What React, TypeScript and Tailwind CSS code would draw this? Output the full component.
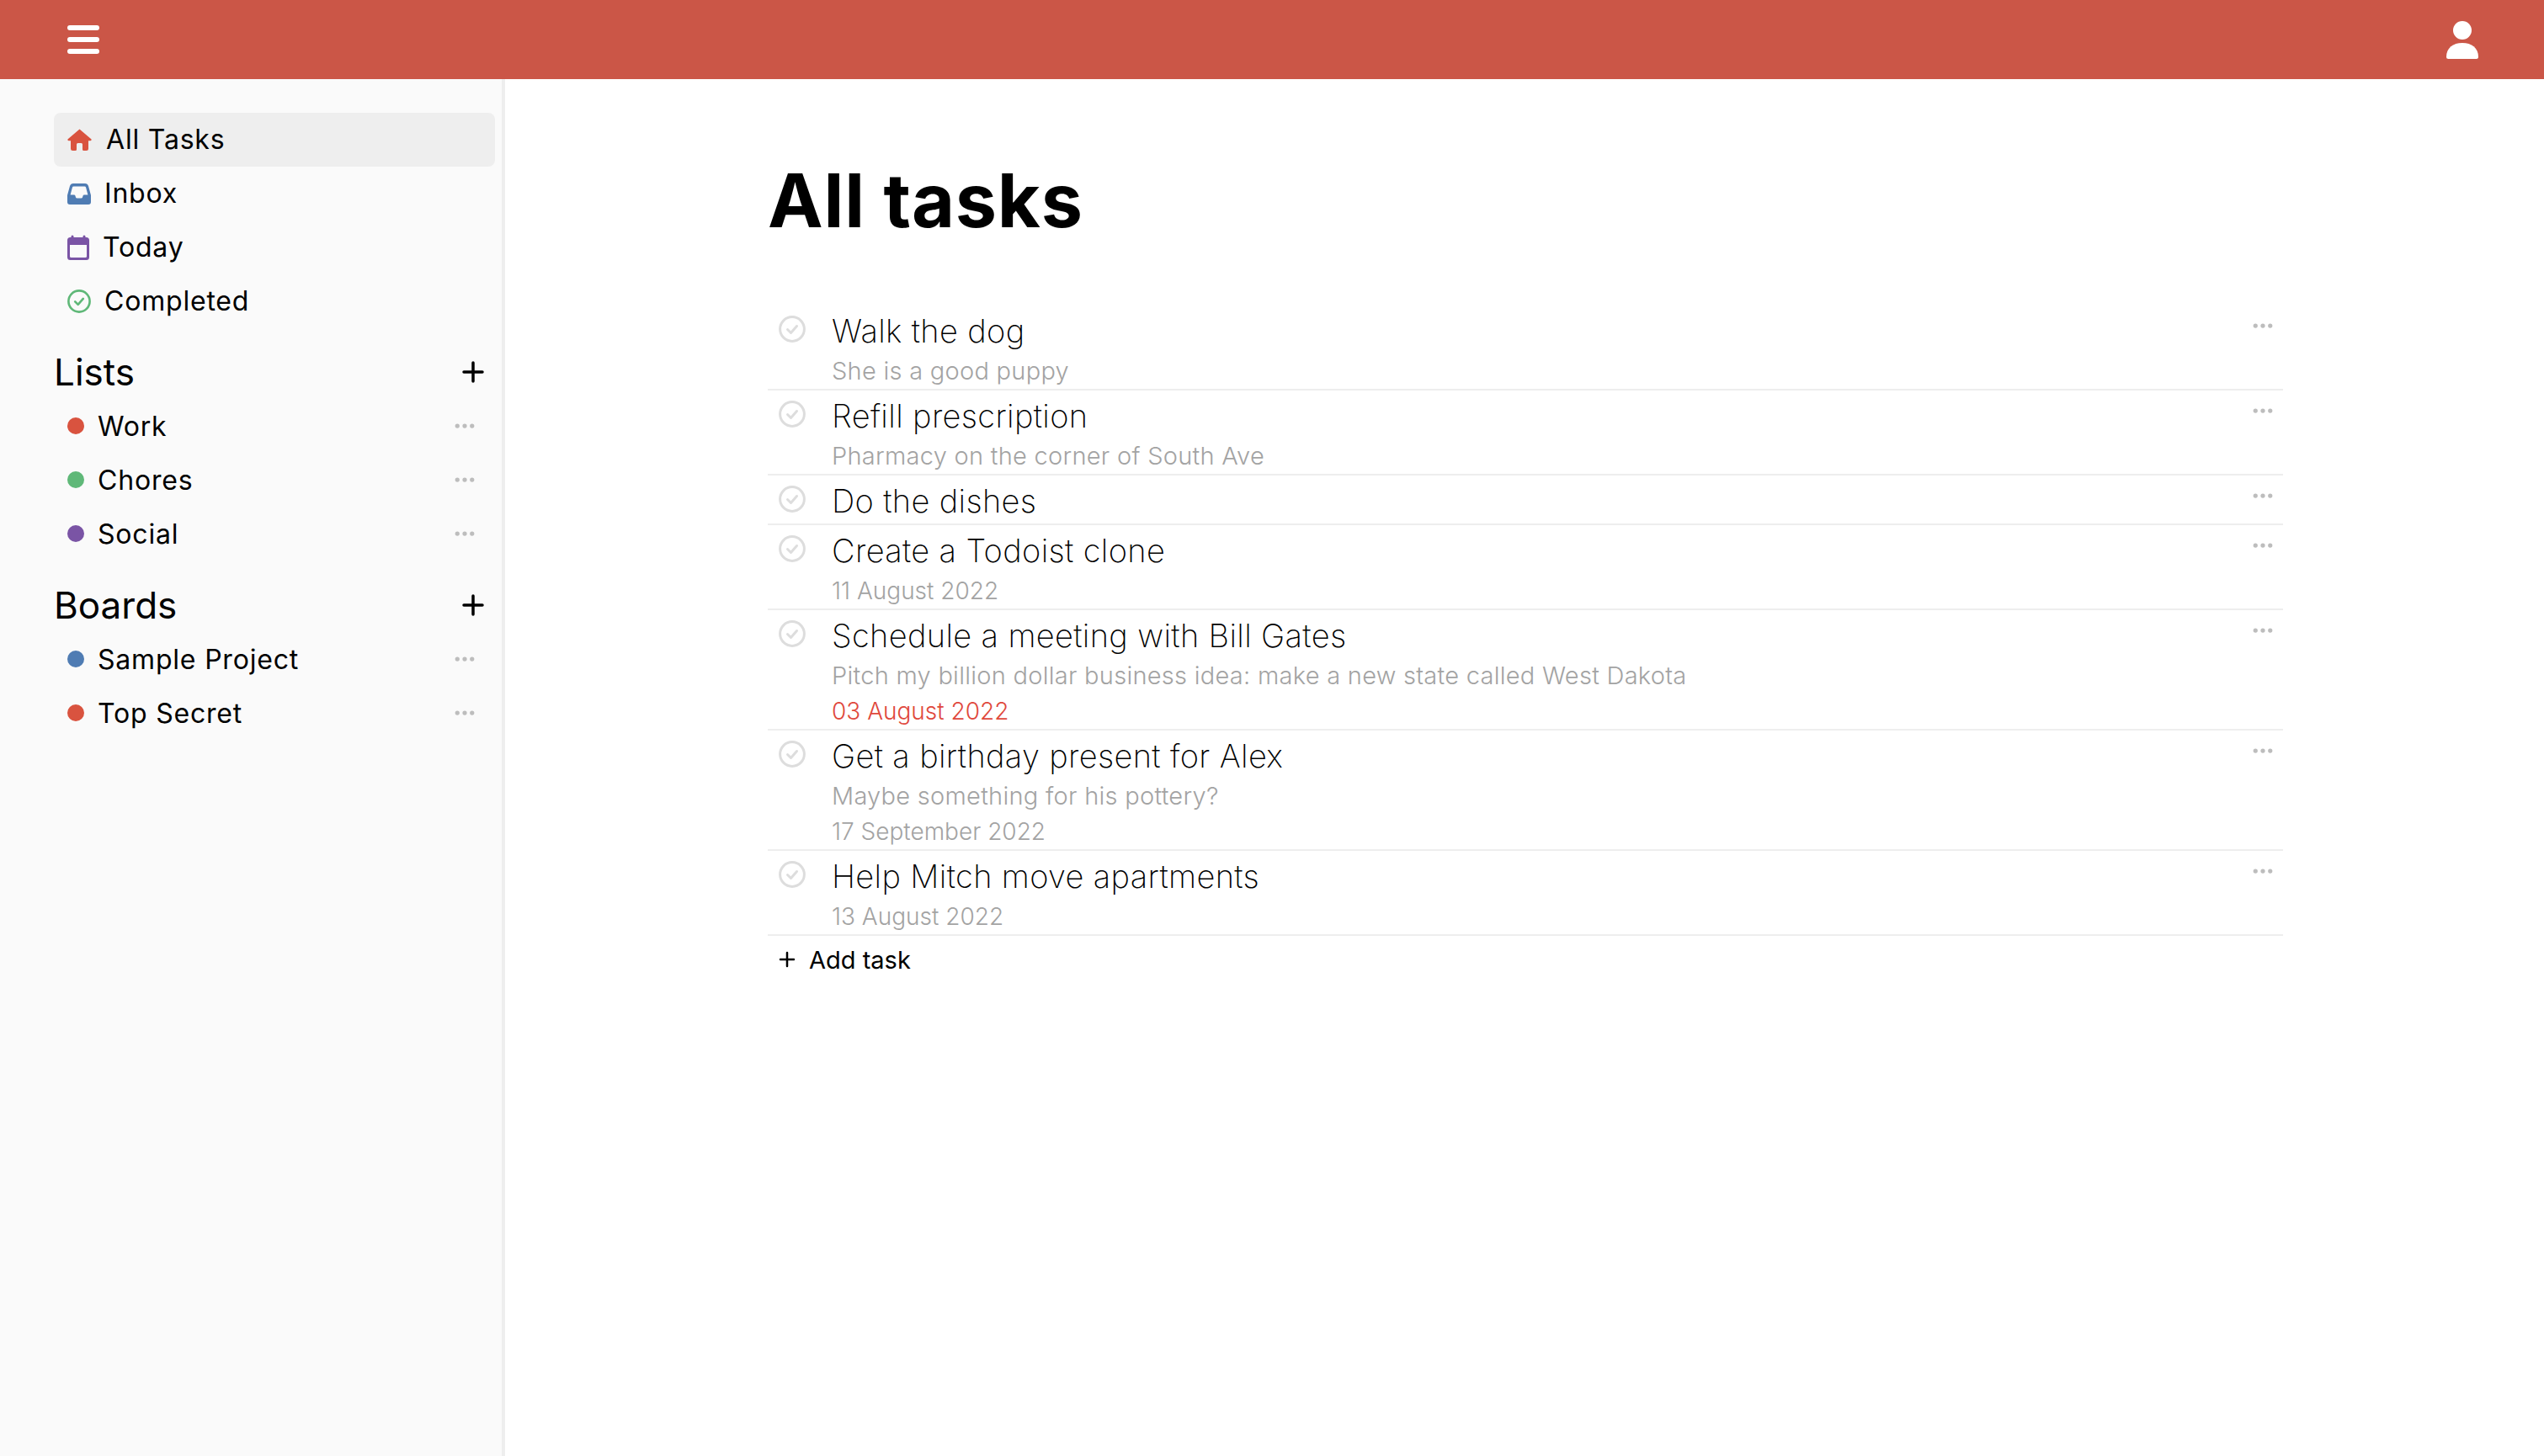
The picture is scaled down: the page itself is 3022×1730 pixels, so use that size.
import { BsThreeDots } from "react-icons/bs";

const navItems = [
  { label: "All Tasks", icon: "home", active: true, gap: "ml-[17px]" },
  { label: "Inbox", icon: "inbox", gap: "ml-[16px]" },
  { label: "Today", icon: "calendar", gap: "ml-[16px]" },
  { label: "Completed", icon: "check", gap: "ml-[16px]" },
];

const lists = [
  { label: "Work", color: "bg-[#d9533f]" },
  { label: "Chores", color: "bg-[#5fb878]" },
  { label: "Social", color: "bg-[#7a54a5]" },
];

const boards = [
  { label: "Sample Project", color: "bg-[#4f7cb3]" },
  { label: "Top Secret", color: "bg-[#d9533f]" },
];

const tasks = [
  { title: "Walk the dog", note: "She is a good puppy" },
  { title: "Refill prescription", note: "Pharmacy on the corner of South Ave" },
  { title: "Do the dishes" },
  { title: "Create a Todoist clone", date: "11 August 2022" },
  {
    title: "Schedule a meeting with Bill Gates",
    note: "Pitch my billion dollar business idea: make a new state called West Dakota",
    date: "03 August 2022",
    overdue: true,
  },
  { title: "Get a birthday present for Alex", note: "Maybe something for his pottery?", date: "17 September 2022" },
  { title: "Help Mitch move apartments", date: "13 August 2022" },
];

const NavIcon = ({ name }: { name: string }) => {
  if (name === "home") {
    return (
      <svg viewBox="0 0 29 26" className="w-[29px] h-[26px] fill-[#d9533f]">
        <path d="M14.5 0.5 L28.6 12.6 Q29 14.2 27.4 14.2 L25 14.2 L25 23.5 Q25 26 22.5 26 L19.5 26 Q18 26 18 24.5 L18 18.5 Q18 17 16.5 17 L12.5 17 Q11 17 11 18.5 L11 24.5 Q11 26 9.5 26 L6.5 26 Q4 26 4 23.5 L4 14.2 L1.6 14.2 Q0 14.2 0.4 12.6 Z" />
      </svg>
    );
  }
  if (name === "inbox") {
    return (
      <svg viewBox="0 0 28 25" className="w-[28px] h-[25px] fill-[#4f7cb3]">
        <path
          fillRule="evenodd"
          d="M7 0 L21 0 Q24 0 25 3 L28 14 L28 22 Q28 25 25 25 L3 25 Q0 25 0 22 L0 14 L3 3 Q4 0 7 0 Z M7.5 3.5 Q6.2 3.5 5.9 4.8 L3.6 13.5 L8 13.5 Q9 13.5 9.4 14.6 L10 16.5 Q10.3 17.5 11.5 17.5 L16.5 17.5 Q17.7 17.5 18 16.5 L18.6 14.6 Q19 13.5 20 13.5 L24.4 13.5 L22.1 4.8 Q21.8 3.5 20.5 3.5 Z"
        />
      </svg>
    );
  }
  if (name === "calendar") {
    return (
      <svg viewBox="0 0 26 30" className="w-[26px] h-[30px] fill-[#7a54a5]">
        <path
          fillRule="evenodd"
          d="M6 0.5 Q7.5 0.5 7.5 2 L7.5 3 L18.5 3 L18.5 2 Q18.5 0.5 20 0.5 Q21.5 0.5 21.5 2 L21.5 3 L22.5 3 Q26 3 26 6.5 L26 26.5 Q26 30 22.5 30 L3.5 30 Q0 30 0 26.5 L0 6.5 Q0 3 3.5 3 L4.5 3 L4.5 2 Q4.5 0.5 6 0.5 Z M3 12 L3 25.5 Q3 27 4.5 27 L21.5 27 Q23 27 23 25.5 L23 12 Z"
        />
      </svg>
    );
  }
  return <CheckCircle className="w-[28px] h-[28px] stroke-[#5fb878]" />;
};

const CheckCircle = ({ className }: { className: string }) => (
  <svg viewBox="0 0 32 32" fill="none" strokeWidth="3" strokeLinecap="round" strokeLinejoin="round" className={className}>
    <circle cx="16" cy="16" r="14.4" />
    <path d="M10.5 16.5 L14.5 20.5 L21.5 12.5" />
  </svg>
);

const PlusIcon = () => (
  <svg viewBox="0 0 26 26" className="w-[26px] h-[26px] stroke-black" strokeWidth="3.5" strokeLinecap="round">
    <path d="M13 2 V24 M2 13 H24" />
  </svg>
);

const PersonIcon = () => (
  <svg viewBox="0 0 38 45" className="w-[38px] h-[45px] fill-white">
    <circle cx="19" cy="11" r="11" />
    <path d="M0 42.5 C0 32 8 26 19 26 C30 26 38 32 38 42.5 Q38 45 35.5 45 L2.5 45 Q0 45 0 42.5 Z" />
  </svg>
);

const Dots = ({ className }: { className: string }) => (
  <BsThreeDots className={`w-[28px] h-[28px] text-[#bdbdbd] ${className}`} />
);

const SideRow = ({ label, color }: { label: string; color: string }) => (
  <div className="flex items-center h-[64px] pl-[16px] pr-[22px]">
    <span className={`w-[20px] h-[20px] rounded-full ${color}`}></span>
    <span className="ml-[16px] pt-[2px] text-[32px] tracking-[0.8px] text-black">{label}</span>
    <Dots className="ml-auto" />
  </div>
);

const SideHeading = ({ label }: { label: string }) => (
  <div className="flex items-center justify-between h-[64px] pr-[13px]">
    <span className="text-[44px] text-black">{label}</span>
    <PlusIcon />
  </div>
);

const TaskRow = ({ task }: { task: (typeof tasks)[number] }) => (
  <div className="flex items-start border-b-2 border-[#eeeeee] pl-[13px] pr-[10px]">
    <CheckCircle className="w-[32px] h-[32px] mt-[12px] stroke-[#dddddd] shrink-0" />
    <div className="ml-[31px] flex-1 font-light">
      <div className="pt-[4px] text-[38px] leading-[53px] font-[250] tracking-[0.35px] text-black">{task.title}</div>
      {task.note && <div className="text-[29px] leading-[42px] tracking-[0.27px] text-[#a3a3a3]">{task.note}</div>}
      {task.date && (
        <div className={`text-[28px] leading-[42px] ${task.overdue ? "text-[#e0483c]" : "text-[#a3a3a3]"}`}>{task.date}</div>
      )}
    </div>
    <Dots className="mt-[10px]" />
  </div>
);

const App = () => {
  return (
    <div className="h-[1730px] flex flex-col bg-white font-['Inter',sans-serif]">
      <header className="h-[94px] shrink-0 bg-[#cb5647] flex items-center justify-between pl-[80px] pr-[78px]">
        <div className="flex flex-col gap-[8px] w-[38px]">
          <span className="h-[6px] rounded-full bg-white"></span>
          <span className="h-[6px] rounded-full bg-white"></span>
          <span className="h-[6px] rounded-full bg-white"></span>
        </div>
        <PersonIcon />
      </header>

      <div className="flex flex-1">
        <aside className="w-[600px] shrink-0 bg-[#fafafa] border-r-4 border-[#eeeeee] pt-[40px] pl-[64px] pr-[8px]">
          {navItems.map((item) => (
            <div
              key={item.label}
              className={`flex items-center h-[64px] pl-[16px] rounded-[8px] ${item.active ? "bg-[#eeeeee]" : ""}`}
            >
              <NavIcon name={item.icon} />
              <span className={`${item.gap} text-[32px] tracking-[0.8px] text-black`}>{item.label}</span>
            </div>
          ))}

          <div className="mt-[20px]">
            <SideHeading label="Lists" />
            {lists.map((item) => (
              <SideRow key={item.label} label={item.label} color={item.color} />
            ))}
          </div>

          <div className="mt-[21px]">
            <SideHeading label="Boards" />
            {boards.map((item) => (
              <SideRow key={item.label} label={item.label} color={item.color} />
            ))}
          </div>
        </aside>

        <main className="flex-1 flex justify-center pl-[2px]">
          <div className="w-[1800px] pt-[94px]">
            <h1 className="text-[88px] leading-[100px] font-bold tracking-[0.8px] text-black">All tasks</h1>
            <div className="mt-[75px]">
              {tasks.map((task) => (
                <TaskRow key={task.title} task={task} />
              ))}
            </div>
            <div className="flex items-center h-[56px] pl-[13px]">
              <svg viewBox="0 0 20 20" className="w-[20px] h-[20px] stroke-black" strokeWidth="2.5" strokeLinecap="round">
                <path d="M10 2 V18 M2 10 H18" />
              </svg>
              <span className="ml-[16px] pt-[1px] text-[29px] text-black">Add task</span>
            </div>
          </div>
        </main>
      </div>
    </div>
  );
};

export default App;
